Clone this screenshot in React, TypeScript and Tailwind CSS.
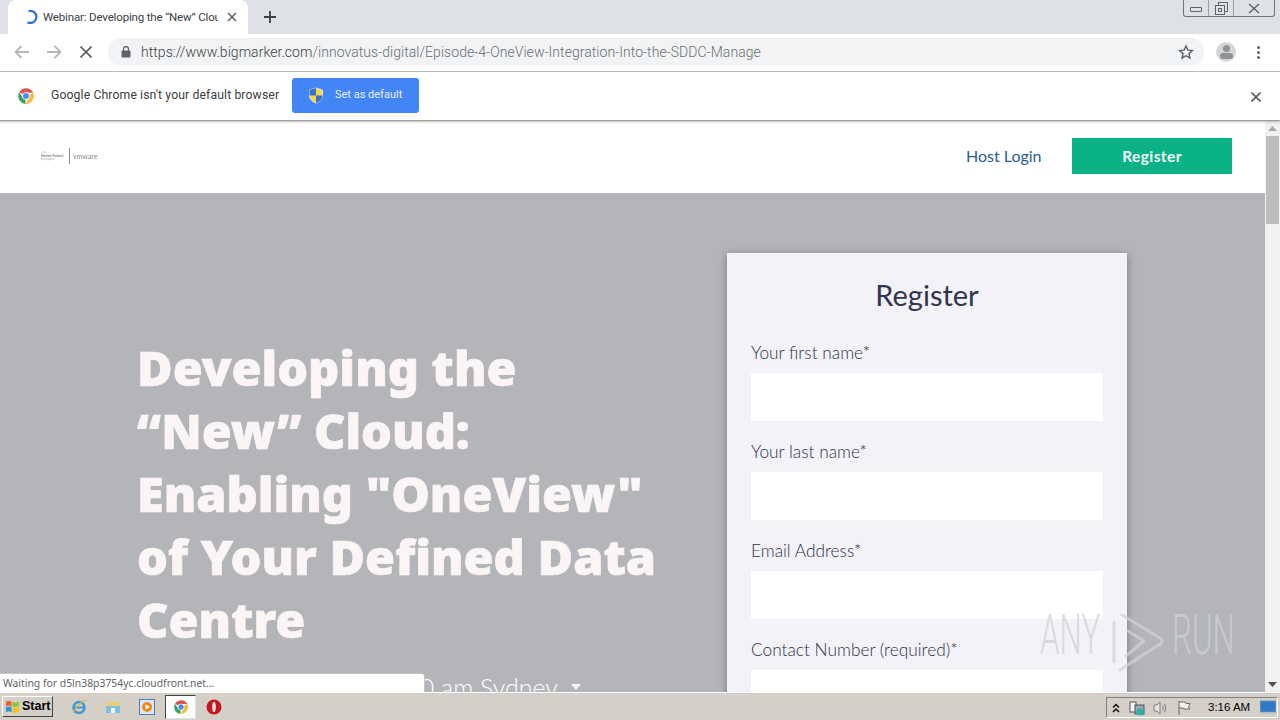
import React from "react";

const ChromeLogo = ({ size = 18 }: { size?: number }) => (
  <svg width={size} height={size} viewBox="0 0 48 48">
    <path d="M24 24 L6 14 A21 21 0 0 1 43 15 L24 15 Z" fill="#d9574a" />
    <path d="M24 24 L43 15 A21 21 0 0 1 22 45 L33 28 Z" fill="#eec23c" />
    <path d="M24 24 L22 45 A21 21 0 0 1 6 14 L16 29 Z" fill="#3aa264" />
    <circle cx="24" cy="24" r="10" fill="#fff" />
    <circle cx="24" cy="24" r="8" fill="#4f8bee" />
  </svg>
);

const Field = ({ label }: { label: string }) => (
  <div className="flex flex-col">
    <div className="h-[35px] text-[17.3px] leading-[29px] font-light text-[#2e3148] whitespace-nowrap">{label}</div>
    <div className="h-[48px] bg-white mb-[16px] shrink-0" />
  </div>
);

export default function App() {
  return (
    <div className="relative w-[1280px] h-[720px] overflow-hidden flex flex-col bg-white font-['Lato',sans-serif]">
      {/* Tab strip */}
      <div className="h-[34px] shrink-0 bg-[#dee1e6] flex items-end relative font-['Roboto',sans-serif]">
        <div className="ml-[8px] w-[240px] h-[34px] bg-white rounded-t-[8px] flex items-center pl-[15px] pr-[10px]">
          <svg width="16" height="16" viewBox="0 0 16 16" className="shrink-0" fill="none">
            <path d="M5.5 2.2 A6 6 0 1 1 4.5 13.2" stroke="#2f6fd0" strokeWidth="2.2" />
          </svg>
          <span className="ml-[4px] w-[175px] overflow-hidden whitespace-nowrap text-[11.5px] leading-[34px] text-[#3c4043] tracking-[-0.16px]">Webinar: Developing the “New” Clou</span>
          <svg width="10" height="10" viewBox="0 0 10 10" className="ml-[9px] shrink-0" stroke="#5f6368" strokeWidth="1.6">
            <path d="M1 1 L9 9 M9 1 L1 9" />
          </svg>
        </div>
        <svg width="12" height="12" viewBox="0 0 12 12" className="ml-[16px] mb-[11px]" stroke="#3c4043" strokeWidth="1.8">
          <path d="M6 0 V12 M0 6 H12" />
        </svg>
        {/* window controls */}
        <div className="absolute right-[5px] top-0 w-[92px] h-[17px] border border-t-0 border-[#70757c] rounded-b-[3px] flex">
          <div className="w-[25px] flex items-center justify-center border-r border-[#9aa0a6]">
            <div className="w-[12px] h-[5px] border border-[#5f6368] rounded-[1px] mt-[3px]" />
          </div>
          <div className="w-[25px] flex items-center justify-center border-r border-[#9aa0a6]">
            <svg width="13" height="13" viewBox="0 0 13 13" fill="none" stroke="#5f6368">
              <rect x="3.5" y="0.5" width="9" height="9" />
              <rect x="0.5" y="3.5" width="9" height="9" fill="#dee1e6" />
              <rect x="3.5" y="6.5" width="3" height="3" />
            </svg>
          </div>
          <div className="flex-1 flex items-center justify-center">
            <svg width="14" height="11" viewBox="0 0 14 11" fill="none" stroke="#5f6368" strokeWidth="1.4">
              <path d="M2 1 L12 10 M12 1 L2 10" />
            </svg>
          </div>
        </div>
      </div>

      {/* Toolbar */}
      <div className="h-[38px] shrink-0 bg-white border-b border-[#b9bbbe] flex items-center pb-[1px]">
        <svg width="16" height="14" viewBox="0 0 16 14" className="ml-[14px]" fill="none" stroke="#b4b7bb" strokeWidth="1.8">
          <path d="M15 7 H2 M7.5 1 L1.5 7 L7.5 13" />
        </svg>
        <svg width="16" height="14" viewBox="0 0 16 14" className="ml-[16px]" fill="none" stroke="#b4b7bb" strokeWidth="1.8">
          <path d="M1 7 H14 M8.5 1 L14.5 7 L8.5 13" />
        </svg>
        <svg width="12" height="12" viewBox="0 0 12 12" className="ml-[18px]" fill="none" stroke="#5f6368" strokeWidth="1.7">
          <path d="M0.5 0.5 L11.5 11.5 M11.5 0.5 L0.5 11.5" />
        </svg>
        <div className="ml-[16px] w-[1096px] h-[28px] bg-[#f1f3f4] rounded-[14px] flex items-center pl-[13px] relative">
          <svg width="10" height="12" viewBox="0 0 10 12" fill="#5f6368" className="shrink-0">
            <rect x="0.5" y="4.5" width="9" height="7" rx="1" />
            <path d="M2.5 5 V3 A2.5 2.5 0 0 1 7.5 3 V5" fill="none" stroke="#5f6368" strokeWidth="1.3" />
          </svg>
          <span className="ml-[10px] whitespace-nowrap text-[14px] leading-[28px] tracking-[0.045px] font-['Roboto',sans-serif] font-light text-[#6b6f74]">
            <span className="text-[#3c4043]">https://www.bigmarker.com</span>/innovatus-digital/Episode-4-OneView-Integration-Into-the-SDDC-Manage
          </span>
          <svg width="16" height="16" viewBox="0 0 24 24" fill="none" stroke="#5f6368" strokeWidth="2.2" className="absolute right-[10px] top-[6px]">
            <path d="M12 3 L14.8 9.2 L21.5 9.9 L16.5 14.4 L17.9 21 L12 17.6 L6.1 21 L7.5 14.4 L2.5 9.9 L9.2 9.2 Z" />
          </svg>
        </div>
        <div className="ml-[12px] w-[20px] h-[20px] rounded-full bg-[#d5d6d8] overflow-hidden flex flex-col items-center">
          <div className="w-[7px] h-[7px] rounded-full bg-[#8f9296] mt-[3px]" />
          <div className="w-[13px] h-[6px] rounded-full bg-[#8f9296] mt-[1px]" />
        </div>
        <div className="ml-[21px] flex flex-col gap-[2px]">
          <div className="w-[3px] h-[3px] rounded-full bg-[#5f6368]" />
          <div className="w-[3px] h-[3px] rounded-full bg-[#5f6368]" />
          <div className="w-[3px] h-[3px] rounded-full bg-[#5f6368]" />
        </div>
      </div>

      {/* Infobar */}
      <div className="h-[49px] shrink-0 bg-white border-b border-[#9b9b9b] shadow-[0_1px_2px_rgba(0,0,0,0.25)] relative z-10 flex items-center pb-[1px] font-['Roboto',sans-serif]">
        <div className="ml-[17px] flex mt-[1px]"><ChromeLogo size={18} /></div>
        <span className="ml-[16px] w-[229px] whitespace-nowrap text-[12.25px] tracking-[0.1px] text-[#3c4043]">Google Chrome isn't your default browser</span>
        <div className="ml-[12px] w-[127px] h-[35px] bg-[#4285f4] rounded-[3px] flex items-center">
          <svg width="16" height="17" viewBox="0 0 16 17" className="ml-[16px]">
            <path d="M8 1 L14.5 3 V9 C14.5 12.5 11 15 8 16 C5 15 1.5 12.5 1.5 9 V3 Z" fill="#f4d84a" stroke="#e8eef7" strokeWidth="0.8" />
            <path d="M8 1 V8.5 H1.5 V3 Z" fill="#3f6fc4" />
            <path d="M8 8.5 H14.5 V9 C14.5 12.5 11 15 8 16 Z" fill="#3f6fc4" />
          </svg>
          <span className="ml-[11px] whitespace-nowrap text-[11px] text-[#e8f0fe]">Set as default</span>
        </div>
        <svg width="10" height="10" viewBox="0 0 10 10" className="absolute left-[1251px] top-[20px]" stroke="#5f6368" strokeWidth="1.8">
          <path d="M0.5 0.5 L9.5 9.5 M9.5 0.5 L0.5 9.5" />
        </svg>
      </div>

      {/* Page area */}
      <div className="flex-1 min-h-0 flex relative">
        <div className="w-[1265px] flex flex-col min-h-0">
          <header className="h-[72px] shrink-0 bg-white flex items-center pb-[2px]">
            <div className="ml-[41px] w-[20px] flex flex-col leading-none text-[3px] text-[#888] opacity-80">
              <span className="text-[#9fd3bd]">HPE</span>
              <span className="font-bold text-[#555] whitespace-nowrap">Hewlett Packard</span>
              <span>Enterprise</span>
            </div>
            <div className="ml-[8px] w-px h-[16px] bg-[#888]" />
            <span className="ml-[3px] text-[7px] leading-none text-[#888] w-[26px]">vmware</span>
            <span className="ml-[867px] text-[16px] text-[#2a5d92] whitespace-nowrap w-[106px]">Host Login</span>
            <div className="w-[160px] h-[36px] bg-[#0bb287] flex items-center justify-center pt-[1px] text-[15.5px] tracking-[0.4px] font-bold text-[#f2fffb]">Register</div>
          </header>
          <main className="flex-1 min-h-0 overflow-hidden bg-[#b4b5b9] flex items-start">
            <div className="ml-[137px] w-[590px] mt-[143px] shrink-0">
              <h1 className="text-[48.6px] leading-[63px] font-black text-[#fbf5f5] [-webkit-text-stroke:0.7px_#fbf5f5] whitespace-nowrap font-['Noto_Sans',sans-serif]">
                Developing the<br />“New” Cloud:<br />Enabling "OneView"<br />of Your Defined Data<br />Centre
              </h1>
              <div className="mt-[21px] ml-[140px] flex items-center text-[25px] leading-[30px] font-light text-white whitespace-nowrap">
                Tuesday 10:00 am Sydney
                <svg width="10" height="6" viewBox="0 0 10 6" className="ml-[13px]" fill="#f5f5f5"><path d="M0 0 H10 L5 6 Z" /></svg>
              </div>
            </div>
            <div className="w-[400px] mt-[60px] shrink-0 bg-[#f2f2f8] shadow-[0_2px_8px_rgba(0,0,0,0.35)] px-[24px] pt-[22px]">
              <h2 className="text-center text-[29px] leading-[40px] font-normal text-[#31344f] mb-[23px]">Register</h2>
              <Field label="Your first name*" />
              <Field label="Your last name*" />
              <Field label="Email Address*" />
              <Field label="Contact Number (required)*" />
            </div>
          </main>
        </div>
        {/* Scrollbar */}
        <div className="w-[15px] bg-[#f1f1f1] flex flex-col items-center relative">
          <svg width="9" height="5" viewBox="0 0 9 5" className="mt-[5px]" fill="#a8a8a8"><path d="M0 5 L4.5 0 L9 5 Z" /></svg>
          <div className="w-[13px] h-[88px] bg-[#bdbdbd] mt-[5px]" />
          <svg width="9" height="5" viewBox="0 0 9 5" className="mt-auto mb-[5px]" fill="#505050"><path d="M0 0 L4.5 5 L9 0 Z" /></svg>
        </div>

        {/* Status bubble */}
        <div className="absolute left-0 bottom-0 w-[425px] h-[19px] bg-white border-t border-r border-[#c4c4c4] rounded-tr-[3px] z-20 pl-[3px] text-[10.4px] leading-[19px] text-[#5f6368] font-['Noto_Sans',sans-serif] whitespace-nowrap">
          Waiting for d5ln38p3754yc.cloudfront.net...
        </div>

        {/* Watermark */}
        <div className="absolute left-[1038px] top-[479px] w-[200px] h-[70px] z-30 pointer-events-none text-[56px] leading-[70px] font-light font-['Roboto',sans-serif] text-[rgba(208,209,213,0.75)] whitespace-nowrap">
          <span className="absolute left-[2px] top-0 origin-left scale-x-[0.56]">ANY</span>
          <svg width="60" height="66" viewBox="0 0 60 66" fill="none" stroke="rgba(208,209,213,0.75)" strokeWidth="3" strokeLinecap="round" strokeLinejoin="round" className="absolute left-[68px] top-[10px]">
            <path d="M8 12 V52 M16 5 L54 28 Q58 31 54 34 L14 60 M22 21 L38 31 L20 46" />
          </svg>
          <span className="absolute left-[134px] top-0 origin-left scale-x-[0.56]">RUN</span>
        </div>
      </div>

      {/* Taskbar */}
      <div className="h-[28px] shrink-0 bg-[#d4d0c8] border-t border-white flex items-center relative font-['Liberation_Sans',sans-serif]">
        <div className="ml-[2px] w-[51px] h-[21px] border border-t-white border-l-white border-r-[#404040] border-b-[#404040] flex items-center pl-[2px]">
          <svg width="15" height="15" viewBox="0 0 16 16">
            <path d="M1 3 C3 1.5 5 2 7 3 V8 C5 7 3 6.5 1 8 Z" fill="#e8622a" />
            <path d="M8 3 C10 4 13 4 15 2 V7 C13 9 10 9 8 8 Z" fill="#8cc63f" />
            <path d="M1 9 C3 7.5 5 8 7 9 V14 C5 13 3 12.5 1 14 Z" fill="#2f8fdc" />
            <path d="M8 9 C10 10 13 10 15 8 V13 C13 15 10 15 8 14 Z" fill="#f4c20d" />
          </svg>
          <span className="ml-[2px] text-[12.5px] font-bold text-black leading-none">Start</span>
        </div>
        <svg width="16" height="16" viewBox="0 0 16 16" className="ml-[18px]" fill="none">
          <circle cx="8" cy="8.5" r="5.5" stroke="#3a9ad9" strokeWidth="2.4" />
          <path d="M3 8.5 H13" stroke="#3a9ad9" strokeWidth="2" />
          <path d="M2 14 C5 8 10 3 15 1" stroke="#e6b53c" strokeWidth="1.3" />
        </svg>
        <svg width="16" height="16" viewBox="0 0 16 16" className="ml-[18px]">
          <rect x="1" y="3" width="14" height="11" fill="#e9cf73" />
          <rect x="1" y="7" width="14" height="7" fill="#7cc0dc" />
          <rect x="6" y="9" width="4" height="5" fill="#f4f4f4" />
        </svg>
        <svg width="16" height="16" viewBox="0 0 16 16" className="ml-[18px]">
          <rect x="0.5" y="0.5" width="15" height="15" fill="#dbe8f5" stroke="#4d7fb5" />
          <circle cx="8" cy="8" r="5" fill="#ee8a1d" />
          <path d="M6.5 5.5 L11 8 L6.5 10.5 Z" fill="#fff" />
        </svg>
        <div className="ml-[10px] w-[31px] h-[24px] bg-white border border-t-[#404040] border-l-[#404040] border-r-[#e0e0e0] border-b-[#e0e0e0] flex items-center justify-center">
          <ChromeLogo size={16} />
        </div>
        <svg width="16" height="16" viewBox="0 0 16 16" className="ml-[10px]">
          <circle cx="8" cy="8" r="7.5" fill="#c4161c" />
          <ellipse cx="8" cy="8" rx="1.8" ry="5" fill="#f7e4e4" />
        </svg>
        {/* Tray */}
        <div className="absolute left-[1106px] top-[4px] w-[172px] h-[21px] border border-t-[#808080] border-l-[#808080] border-r-white border-b-white flex items-center">
          <svg width="8" height="10" viewBox="0 0 8 10" className="ml-[5px]" fill="none" stroke="#111" strokeWidth="1.5">
            <path d="M1 4.5 L4 1.5 L7 4.5 M1 9 L4 6 L7 9" />
          </svg>
          <svg width="16" height="16" viewBox="0 0 16 16" className="ml-[9px]">
            <rect x="1" y="2" width="6" height="10" fill="#f5f5f5" stroke="#555" />
            <rect x="6" y="5" width="9" height="9" fill="#9aa7b5" stroke="#555" />
            <circle cx="11" cy="12" r="3.5" fill="#2bb3a8" />
          </svg>
          <svg width="16" height="16" viewBox="0 0 16 16" className="ml-[7px]" fill="none" stroke="#7d7d7d">
            <path d="M2 5 H5 L8 2 V14 L5 11 H2 Z" fill="#e6e6e6" />
            <path d="M10.5 5.5 C11.5 7 11.5 9 10.5 10.5 M12.5 4 C14 6.5 14 9.5 12.5 12" />
          </svg>
          <svg width="16" height="16" viewBox="0 0 16 16" className="ml-[8px]" fill="none" stroke="#6a6a6a">
            <path d="M3 1 V15 M3 2 H9 L10 3.5 H14 L12.5 7 L14 9 H8 L7 8 H3" fill="#f2f0ea" />
          </svg>
          <span className="ml-[16px] w-[46px] text-[11.5px] leading-none text-black whitespace-nowrap">3:16 AM</span>
          <svg width="16" height="15" viewBox="0 0 16 15" className="ml-[6px]">
            <rect x="0.5" y="1" width="15" height="11" fill="#2f79c9" stroke="#6a8fb5" />
            <rect x="2" y="12" width="12" height="2" fill="#b4bfca" />
          </svg>
        </div>
      </div>
    </div>
  );
}
